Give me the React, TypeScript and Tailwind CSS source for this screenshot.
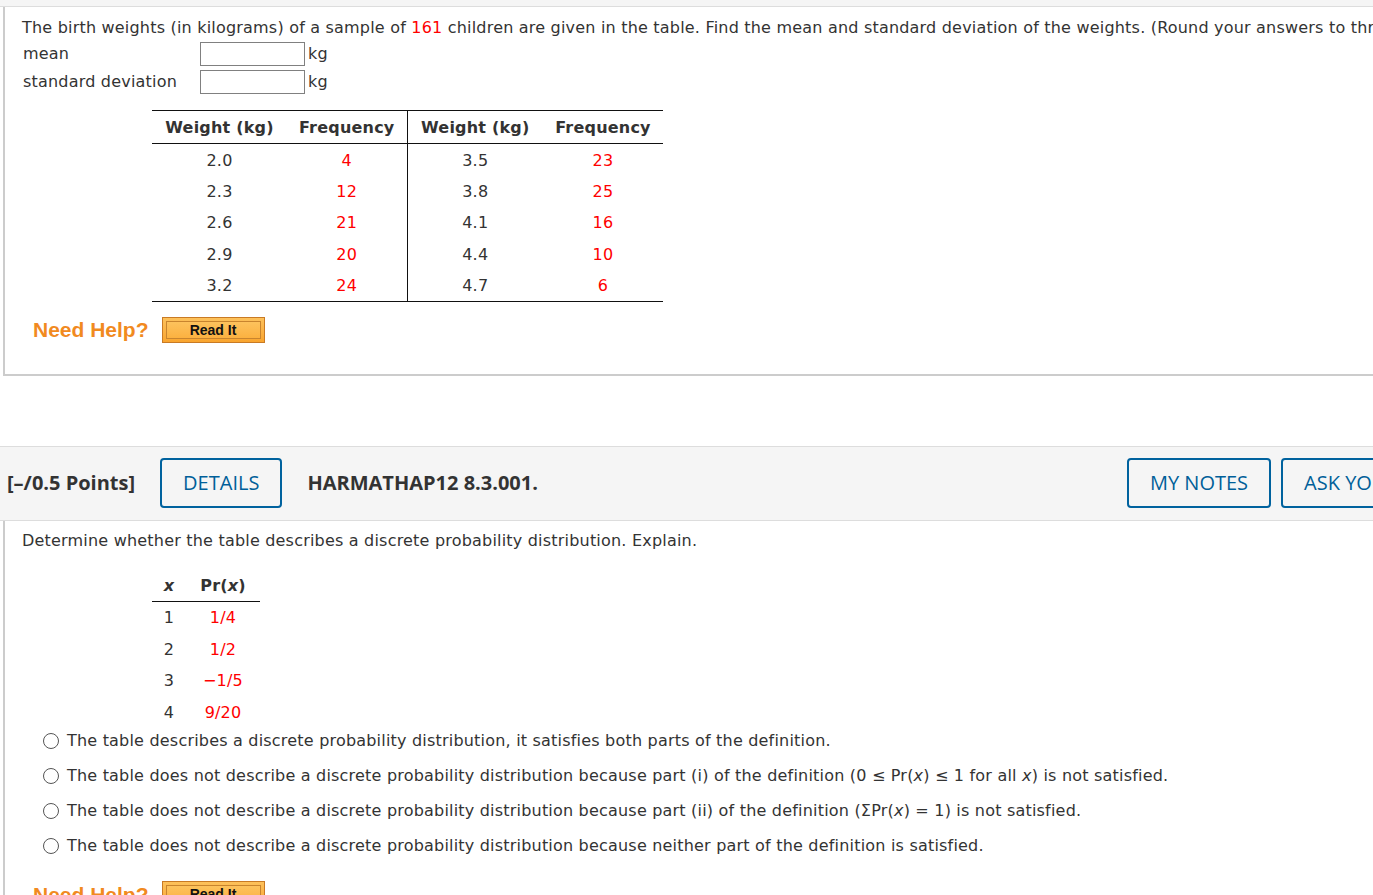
import React from "react";

const RED = "text-[#ff0000]";

function ReadIt() {
  return (
    <div className="w-[103px] h-[26px] border border-[#c97a24] bg-gradient-to-b from-[#fdc15a] to-[#f9a52e] flex p-[3px]">
      <div className="flex-1 border border-[#c8842e] bg-gradient-to-b from-[#fdc25c] to-[#fbb140] flex items-center justify-center">
        <span className="text-[14px] font-bold text-[#111] leading-none tracking-normal" style={{ fontFamily: '"Liberation Sans", Arial, sans-serif' }}>
          Read It
        </span>
      </div>
    </div>
  );
}

function NeedHelp() {
  return (
    <div className="flex items-center ml-[11px]">
      <span className="text-[21px] font-bold text-[#f18a1f] leading-none tracking-normal" style={{ fontFamily: '"Liberation Sans", Arial, sans-serif' }}>
        Need Help?
      </span>
      <div className="ml-[13px]">
        <ReadIt />
      </div>
    </div>
  );
}

function Radio({ children }: { children: React.ReactNode }) {
  return (
    <div className="flex items-center h-[20px] ml-[21px] whitespace-nowrap">
      <span className="w-[16px] h-[16px] rounded-full border border-[#555] bg-white mr-[8px] shrink-0" />
      <span>{children}</span>
    </div>
  );
}

const rowsL = [
  ["2.0", "4"],
  ["2.3", "12"],
  ["2.6", "21"],
  ["2.9", "20"],
  ["3.2", "24"],
];
const rowsR = [
  ["3.5", "23"],
  ["3.8", "25"],
  ["4.1", "16"],
  ["4.4", "10"],
  ["4.7", "6"],
];

export default function App() {
  return (
    <div
      className="w-[1373px] h-[895px] overflow-hidden bg-white text-[#333] text-[16px] leading-[20px] tracking-[0.2px]"
      style={{ fontFamily: '"DejaVu Sans", Verdana, sans-serif' }}
    >
      <div className="h-[7px] bg-[#f5f5f5] border-b border-[#dddddd]" />

      {/* Panel 1 */}
      <div className="ml-[3px] w-[1500px] border-l-2 border-b-2 border-[#cccccc] pl-[17px] pt-[11px] pb-[31px]">
        <div className="whitespace-nowrap">
          The birth weights (in kilograms) of a sample of <span className={RED}>161</span> children are given in the table. Find the mean and standard deviation of the weights. (Round your answers to three decimal places.)
        </div>
        <div className="mt-[2px]">
          <div className="flex items-center h-[28px]">
            <span className="w-[178px] pl-[1px]">mean</span>
            <div className="w-[105px] h-[24px] border border-[#808080] bg-white" />
            <span className="ml-[3px]">kg</span>
          </div>
          <div className="flex items-center h-[28px]">
            <span className="w-[178px] pl-[1px]">standard deviation</span>
            <div className="w-[105px] h-[24px] border border-[#808080] bg-white" />
            <span className="ml-[3px]">kg</span>
          </div>
        </div>

        <table className="ml-[130px] mt-[14px] border-collapse border-t border-b border-[#111]">
          <thead>
            <tr className="h-[33px] border-b border-[#111]">
              <th className="w-[135px] font-bold text-center pt-[1px]">Weight (kg)</th>
              <th className="w-[120px] font-bold text-center border-r border-[#111] pt-[1px]">Frequency</th>
              <th className="w-[136px] font-bold text-center pt-[1px]">Weight (kg)</th>
              <th className="w-[120px] font-bold text-center pt-[1px]">Frequency</th>
            </tr>
          </thead>
          <tbody>
            {rowsL.map((r, i) => (
              <tr key={i} className="h-[31.5px]">
                <td className="text-center pt-[2px]">{r[0]}</td>
                <td className={`text-center border-r border-[#111] pt-[2px] ${RED}`}>{r[1]}</td>
                <td className="text-center pt-[2px]">{rowsR[i][0]}</td>
                <td className={`text-center pt-[2px] ${RED}`}>{rowsR[i][1]}</td>
              </tr>
            ))}
          </tbody>
        </table>

        <div className="mt-[15px]">
          <NeedHelp />
        </div>
      </div>

      {/* Header 2 */}
      <div
        className="mt-[70px] w-[1600px] h-[75px] bg-[#f5f5f5] border-t border-b border-[#dddddd] flex items-center pl-[7px] tracking-normal"
        style={{ fontFamily: '"Open Sans", "Noto Sans", sans-serif' }}
      >
        <div className="w-[1120px] flex items-center">
          <span className="text-[20px] font-bold text-[#333]">[–/0.5 Points]</span>
          <div className="ml-[25px] h-[50px] px-[21px] border-2 border-[#00629e] rounded-[4px] flex items-center text-[20px] text-[#005f99]">
            DETAILS
          </div>
          <span className="ml-[25px] text-[20px] font-bold text-[#333]">HARMATHAP12 8.3.001.</span>
        </div>
        <div className="flex items-center gap-[10px]">
          <div className="h-[50px] px-[21px] border-2 border-[#00629e] rounded-[4px] flex items-center text-[20px] text-[#005f99]">
            MY NOTES
          </div>
          <div className="h-[50px] px-[21px] border-2 border-[#00629e] rounded-[4px] flex items-center text-[20px] text-[#005f99] whitespace-nowrap">
            ASK YOUR TEACHER
          </div>
        </div>
      </div>

      {/* Panel 2 */}
      <div className="ml-[3px] w-[1500px] border-l-2 border-[#cccccc] pl-[17px] pt-[10px] pb-[40px]">
        <div className="whitespace-nowrap">Determine whether the table describes a discrete probability distribution. Explain.</div>

        <table className="ml-[130px] mt-[20px] border-collapse">
          <thead>
            <tr className="h-[31px] border-b border-[#111]">
              <th className="w-[34px] font-bold text-center italic">x</th>
              <th className="w-[74px] font-bold text-center">
                Pr(<span className="italic">x</span>)
              </th>
            </tr>
          </thead>
          <tbody>
            {[
              ["1", "1/4"],
              ["2", "1/2"],
              ["3", "\u22121/5"],
              ["4", "9/20"],
            ].map((r, i) => (
              <tr key={i} className="h-[31.7px]">
                <td className="text-center pt-[1px]">{r[0]}</td>
                <td className={`text-center pt-[1px] ${RED}`}>{r[1]}</td>
              </tr>
            ))}
          </tbody>
        </table>

        <div className="mt-[3px] flex flex-col gap-[15px]">
          <Radio>The table describes a discrete probability distribution, it satisfies both parts of the definition.</Radio>
          <Radio>
            The table does not describe a discrete probability distribution because part (i) of the definition (0 ≤ Pr(<span className="italic">x</span>) ≤ 1 for all <span className="italic">x</span>) is not satisfied.
          </Radio>
          <Radio>
            The table does not describe a discrete probability distribution because part (ii) of the definition (ΣPr(<span className="italic">x</span>) = 1) is not satisfied.
          </Radio>
          <Radio>The table does not describe a discrete probability distribution because neither part of the definition is satisfied.</Radio>
        </div>

        <div className="mt-[25px]">
          <NeedHelp />
        </div>
      </div>
    </div>
  );
}
